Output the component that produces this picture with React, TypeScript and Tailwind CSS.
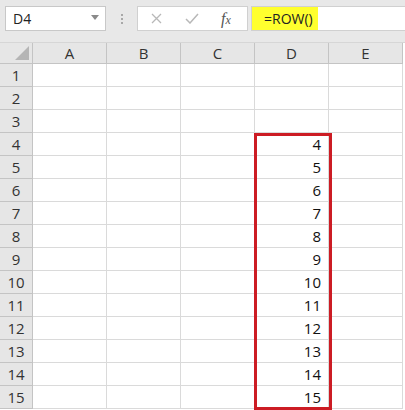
import React from 'react';

const cols = ['A', 'B', 'C', 'D', 'E'];
const rows = Array.from({ length: 15 }, (_, i) => i + 1);

const App: React.FC = () => {
  return (
    <div
      className="w-[405px] h-[410px] overflow-hidden bg-white relative text-[#222]"
      style={{ fontFamily: '"Open Sans", "Liberation Sans", sans-serif' }}
    >
      {/* Formula bar */}
      <div className="h-[43px] bg-[#e8e8e8] flex items-start pt-[6px] pl-[5px] border-b border-[#d6d6d6]">
        <div className="w-[101px] h-[25px] bg-white border border-[#c8c8c8] flex items-center justify-between pl-[7px] pr-[6px] text-[14px]">
          <span>D4</span>
          <svg width="8" height="5" viewBox="0 0 8 5" className="mt-[-2px]">
            <path d="M0 0 L8 0 L4 5 Z" fill="#8a8a8a" />
          </svg>
        </div>
        <div className="w-[31px] h-[25px] flex flex-col items-center justify-center gap-[2px]">
          <span className="w-[2px] h-[2px] bg-[#a8a8a8]" />
          <span className="w-[2px] h-[2px] bg-[#a8a8a8]" />
          <span className="w-[2px] h-[2px] bg-[#a8a8a8]" />
        </div>
        <div className="w-[111px] h-[25px] bg-white border border-[#d0d0d0] flex items-center">
          <svg width="11" height="11" viewBox="0 0 11 11" className="ml-[13px]">
            <path d="M1 1 L10 10 M10 1 L1 10" stroke="#b8b8b8" strokeWidth="1.3" />
          </svg>
          <svg width="14" height="11" viewBox="0 0 14 11" className="ml-[23px]">
            <path d="M1 6 L5 10 L13 1" stroke="#b8b8b8" strokeWidth="1.5" fill="none" />
          </svg>
          <span
            className="ml-[22px] text-[16px] italic text-[#555] leading-none"
            style={{ fontFamily: '"Liberation Serif", serif' }}
          >
            f<span className="text-[12px]">x</span>
          </span>
        </div>
        <div className="ml-[3px] flex-1 h-[25px] bg-white border-y border-l border-[#d0d0d0] flex">
          <div className="w-[66px] h-full bg-[#ffff2e] flex items-center pl-[12px] text-[14px] text-[#222]">
            =ROW()
          </div>
        </div>
      </div>

      {/* Grid */}
      <div className="grid grid-cols-[33px_repeat(5,74px)] grid-rows-[21px_repeat(15,23px)]">
        <div className="bg-[#e6e6e6] border-r border-b border-[#c4c4c4] flex items-end justify-end pr-[3px] pb-[3px]">
          <svg width="14" height="14" viewBox="0 0 14 14">
            <path d="M14 0 L14 14 L0 14 Z" fill="#b5b5b5" />
          </svg>
        </div>
        {cols.map(c => (
          <div
            key={c}
            className="bg-[#e6e6e6] border-r border-b border-[#c4c4c4] flex items-center justify-center text-[15px] text-[#333]"
          >
            {c}
          </div>
        ))}
        {rows.map(r => (
          <React.Fragment key={r}>
            <div className="bg-[#e6e6e6] border-r border-b border-[#c4c4c4] flex items-center justify-center text-[15px] text-[#333]">
              {r}
            </div>
            {cols.map(c => (
              <div
                key={c}
                className="border-r border-b border-[#dadada] flex items-center justify-end pr-[7px] text-[15px] text-[#111]"
              >
                {c === 'D' && r >= 4 ? r : ''}
              </div>
            ))}
          </React.Fragment>
        ))}
      </div>

      {/* Selection outline */}
      <div className="absolute left-[254px] top-[133px] w-[78px] h-[277px] border-[3px] border-[#cc1c24]" />
    </div>
  );
};

export default App;
